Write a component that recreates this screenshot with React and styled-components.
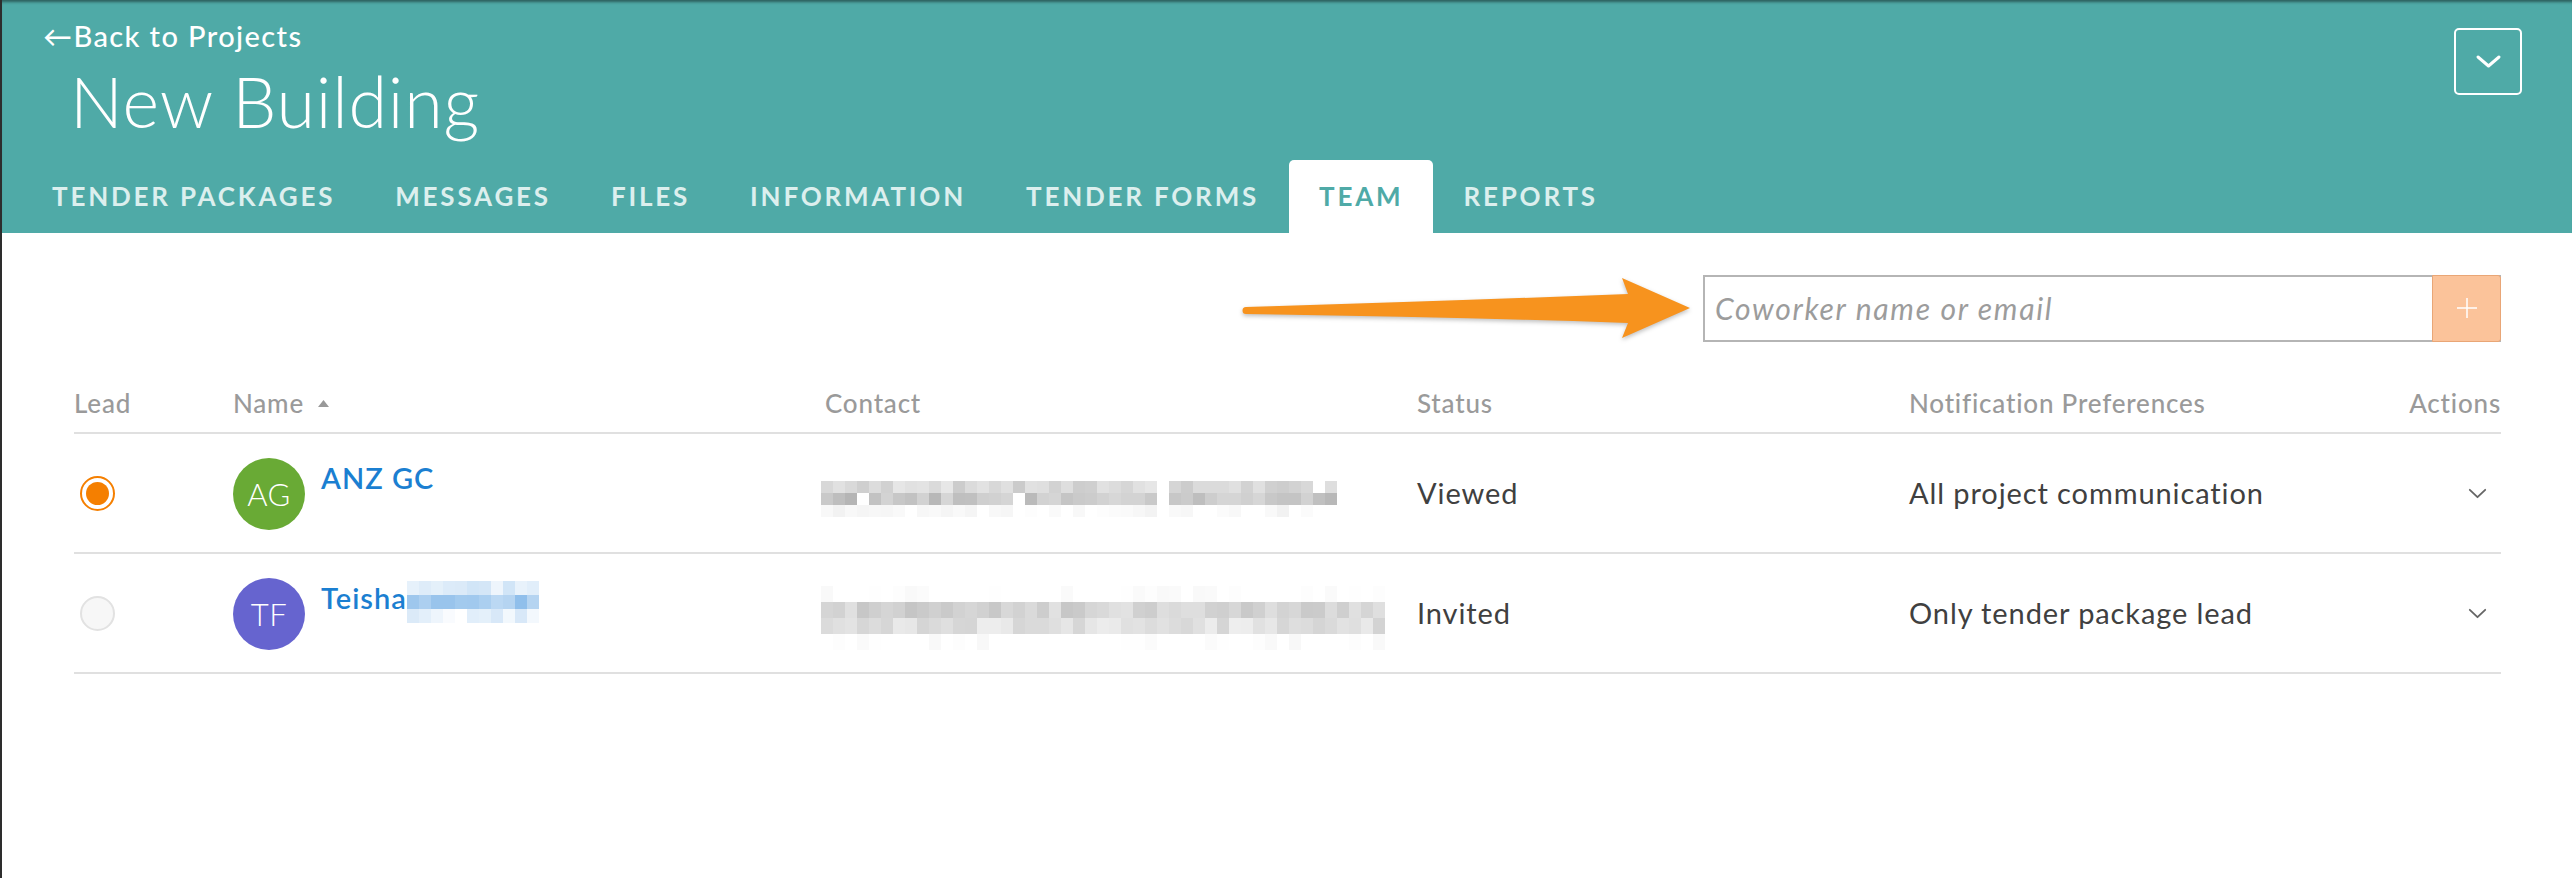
import React from 'react'
import styled, { createGlobalStyle } from 'styled-components'

const GlobalStyle = createGlobalStyle`
  html, body { margin: 0; padding: 0; background: #fff; }
  body { font-family: Lato, "Open Sans", sans-serif; }
  * { box-sizing: border-box; }
`;

const TEAL = '#4faaa7';
const COLS = '159px 592px 592px 492px 1fr auto';

const Page = styled.div`
    min-height: 100vh;
    border-left: 2px solid #2d2d2d;
    background: #fff;
`;

const Header = styled.header`
    display: flex;
    height: 233px;
    background: ${TEAL};
    box-shadow: inset 0 4px 3px -2px rgba(0, 0, 0, 0.45);
`;

const HeaderLeft = styled.div`
    flex: 1;
    display: flex;
    flex-direction: column;
`;

const BackLink = styled.a`
    display: block;
    margin: 21px 0 0 41px;
    font-size: 29px;
    line-height: 29px;
    font-weight: 500;
    letter-spacing: 1.4px;
    color: #fff;
    text-decoration: none;
`;

const Title = styled.h1`
    margin: 16px 0 0 68px;
    font-size: 70px;
    line-height: 70px;
    font-weight: 300;
    letter-spacing: 0.8px;
    color: #fff;
`;

const TabBar = styled.nav`
    display: flex;
    margin: auto 0 0 20px;
    height: 73px;
`;

const Tab = styled.a`
    padding: 0 30px;
    line-height: 73px;
    font-size: 26px;
    font-weight: 700;
    letter-spacing: 2.8px;
    color: ${p => p.$active ? TEAL : '#dcefee'};
    background: ${p => p.$active ? '#fff' : 'transparent'};
    border-radius: 5px 5px 0 0;
    cursor: pointer;
`;

const MenuButton = styled.button`
    align-self: flex-start;
    display: flex;
    align-items: center;
    justify-content: center;
    width: 68px;
    height: 67px;
    margin: 28px 50px 0 0;
    background: transparent;
    border: 2px solid #fff;
    border-radius: 5px;
    padding: 0;
`;

const Main = styled.main`
    padding: 0 71px 0 72px;
`;

const Toolbar = styled.div`
    display: flex;
    justify-content: flex-end;
    align-items: center;
    margin-top: 39px;
`;

const Arrow = styled.svg`
    margin-right: 11px;
    filter: drop-shadow(0 2px 2px rgba(0, 0, 0, 0.25));
`;

const SearchBox = styled.div`
    display: flex;
    width: 798px;
    height: 67px;
    border: 2px solid #b5b5b5;
    background: #fff;
`;

const SearchInput = styled.input`
    flex: 1;
    border: none;
    outline: none;
    padding: 0 0 0 10px;
    font-family: Lato, sans-serif;
    font-style: italic;
    font-size: 30px;
    letter-spacing: 1.7px;
    color: #444;
    &::placeholder { color: #9c9c9c; }
`;

const AddButton = styled.button`
    width: 69px;
    margin: -2px -2px -2px 0;
    display: flex;
    align-items: center;
    justify-content: center;
    background: #fbc39a;
    border: 1px solid #e9a676;
    border-radius: 0 3px 3px 0;
    padding: 0;
`;

const HeadRow = styled.div`
    display: grid;
    grid-template-columns: ${COLS};
    align-items: end;
    height: 90px;
    padding-bottom: 14px;
    border-bottom: 2px solid #e0e0e0;
`;

const HeadCell = styled.div`
    display: flex;
    align-items: center;
    font-size: 26px;
    line-height: 30px;
    font-weight: 500;
    letter-spacing: 0.8px;
    color: #9a9a9a;
    justify-self: ${p => p.$right ? 'end' : 'start'};
`;

const SortMark = styled.svg`
    margin-left: 14px;
`;

const Row = styled.div`
    display: grid;
    grid-template-columns: ${COLS};
    align-items: center;
    height: 120px;
    border-bottom: 2px solid #e0e0e0;
`;

const LeadCell = styled.div`
    padding-left: 6px;
`;

const Radio = styled.span`
    display: flex;
    align-items: center;
    justify-content: center;
    width: 35px;
    height: 35px;
    border-radius: 50%;
    border: 2px solid ${p => p.$on ? '#f57f00' : '#e2e2e2'};
    background: ${p => p.$on ? '#fff' : '#f7f7f7'};
    &::after {
        content: '';
        display: ${p => p.$on ? 'block' : 'none'};
        width: 23px;
        height: 23px;
        border-radius: 50%;
        background: #f57f00;
    }
`;

const NameCell = styled.div`
    display: flex;
    align-items: flex-start;
    gap: 16px;
    margin-top: 2px;
`;

const Avatar = styled.span`
    display: flex;
    align-items: center;
    justify-content: center;
    width: 72px;
    height: 72px;
    border-radius: 50%;
    background: ${p => p.$color};
    color: #fff;
    font-size: 31px;
    font-weight: 300;
    letter-spacing: 0.5px;
`;

const NameLine = styled.div`
    display: flex;
    align-items: flex-start;
    margin-top: 3px;
`;

const NameLink = styled.a`
    font-size: 29px;
    line-height: 34px;
    font-weight: 600;
    letter-spacing: 1px;
    color: #1b7fd1;
`;

const Pixels = styled.div`
    display: grid;
    grid-template-columns: repeat(${p => p.$cols}, ${p => p.$w}px);
    grid-auto-rows: ${p => p.$h}px;
    margin-left: ${p => p.$left || 0}px;
    margin-top: ${p => p.$top || 0}px;
`;

const Px = styled.span.attrs(p => ({ style: { background: p.$c } }))``;

const BodyText = styled.div`
    font-size: 29px;
    line-height: 34px;
    letter-spacing: 0.9px;
    color: #404040;
`;

const ActionCell = styled.div`
    justify-self: end;
    margin-right: 14px;
    display: flex;
`;

// deterministic "blurred" blocks for the redacted text
const makeCells = (seed, cols, rows, base) => {
    let s = seed;
    const rnd = () => { s = (s * 9301 + 49297) % 233280; return s / 233280; };
    const out = [];
    rows.forEach(([lo, hi, blank]) => {
        for (let i = 0; i < cols; i++) {
            if (rnd() < blank) { out.push('transparent'); continue; }
            const a = (lo + rnd() * (hi - lo)).toFixed(2);
            out.push(`rgba(${base},${a})`);
        }
    });
    return out;
};

const Blur = ({ seed, cols, rows, base, w, h, left, top }) => (
    <Pixels $cols={cols} $w={w} $h={h} $left={left} $top={top}>
        {makeCells(seed, cols, rows, base).map((c, i) => <Px key={i} $c={c} />)}
    </Pixels>
);

const GRAY = '140,140,140';
const BLUE = '90,160,225';

const Chevron = ({ w, h, stroke, color }) => (
    <svg width={w} height={h} viewBox={`0 0 ${w} ${h}`}>
        <polyline points={`${stroke},${stroke} ${w / 2},${h - stroke} ${w - stroke},${stroke}`}
            fill="none" stroke={color} strokeWidth={stroke} strokeLinecap="round" strokeLinejoin="round" />
    </svg>
);

const tabs = ['TENDER PACKAGES', 'MESSAGES', 'FILES', 'INFORMATION', 'TENDER FORMS', 'TEAM', 'REPORTS'];

const members = [
    {
        initials: 'AG', color: '#69aa35', name: 'ANZ GC', lead: true,
        status: 'Viewed', pref: 'All project communication',
        contact: { seed: 7, cols: 43, w: 12, h: 12, top: 12, rows: [[0.2, 0.45, 0.05], [0.35, 0.65, 0.03], [0.0, 0.12, 0.3]] },
    },
    {
        initials: 'TF', color: '#6664cf', name: 'Teisha', lead: false,
        status: 'Invited', pref: 'Only tender package lead',
        surname: { seed: 3, cols: 11, w: 12, h: 14, rows: [[0.1, 0.35, 0.1], [0.4, 0.7, 0], [0.03, 0.25, 0.1]] },
        contact: { seed: 11, cols: 47, w: 12, h: 16, top: 10, rows: [[0.0, 0.06, 0.6], [0.25, 0.5, 0], [0.15, 0.38, 0], [0.0, 0.06, 0.6]] },
    },
];

export default function App() {
    return (
        <Page>
            <GlobalStyle />
            <Header>
                <HeaderLeft>
                    <BackLink>←Back to Projects</BackLink>
                    <Title>New Building</Title>
                    <TabBar>
                        {tabs.map(t => <Tab key={t} $active={t === 'TEAM'}>{t}</Tab>)}
                    </TabBar>
                </HeaderLeft>
                <MenuButton>
                    <Chevron w={27} h={15} stroke={3} color="#fff" />
                </MenuButton>
            </Header>
            <Main>
                <Toolbar>
                    <Arrow width="452" height="72" viewBox="0 0 452 72">
                        <path d="M388 22 L382 6 L450 36 L382 66 L388 51 Q210 45 6 42 A3.5 3.5 0 0 1 6 35 Q210 29 388 22 Z" fill="#f7931e" />
                    </Arrow>
                    <SearchBox>
                        <SearchInput placeholder="Coworker name or email" />
                        <AddButton>
                            <svg width="22" height="22" viewBox="0 0 22 22">
                                <path d="M11 1 V21 M1 11 H21" stroke="#fff" strokeWidth="1.5" />
                            </svg>
                        </AddButton>
                    </SearchBox>
                </Toolbar>
                <HeadRow>
                    <HeadCell>Lead</HeadCell>
                    <HeadCell>
                        Name
                        <SortMark width="11" height="7" viewBox="0 0 11 7"><path d="M0 7 L5.5 0 L11 7 Z" fill="#999" /></SortMark>
                    </HeadCell>
                    <HeadCell>Contact</HeadCell>
                    <HeadCell>Status</HeadCell>
                    <HeadCell>Notification Preferences</HeadCell>
                    <HeadCell $right>Actions</HeadCell>
                </HeadRow>
                {members.map(m => (
                    <Row key={m.initials}>
                        <LeadCell><Radio $on={m.lead} /></LeadCell>
                        <NameCell>
                            <Avatar $color={m.color}>{m.initials}</Avatar>
                            <NameLine>
                                <NameLink>{m.name}</NameLink>
                                {m.surname && <Blur {...m.surname} base={BLUE} top={0} />}
                            </NameLine>
                        </NameCell>
                        <Blur {...m.contact} base={GRAY} left={-4} />
                        <BodyText>{m.status}</BodyText>
                        <BodyText>{m.pref}</BodyText>
                        <ActionCell><Chevron w={19} h={11} stroke={1.8} color="#666" /></ActionCell>
                    </Row>
                ))}
            </Main>
        </Page>
    );
}
